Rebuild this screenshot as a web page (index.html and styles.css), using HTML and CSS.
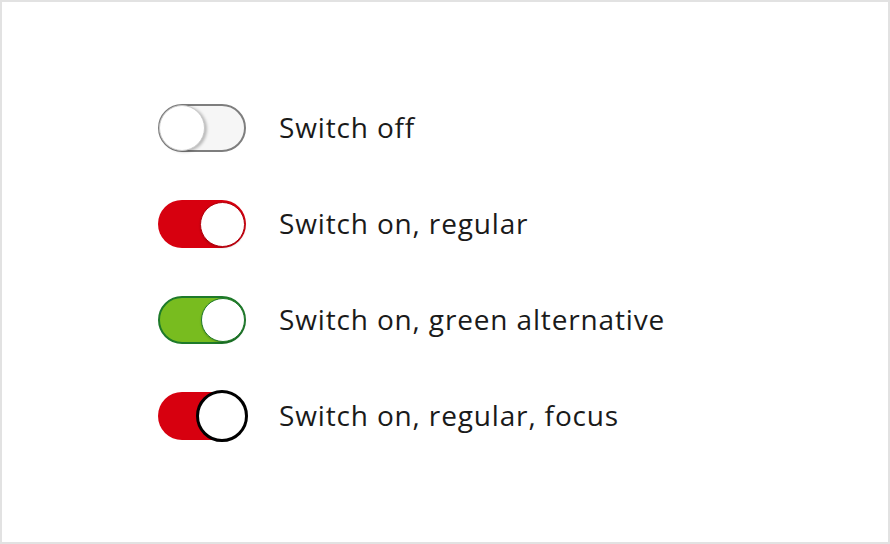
FILE: index.html
```html
<!DOCTYPE html>
<html lang="en">
<head>
<meta charset="utf-8">
<title>Switches</title>
<link rel="stylesheet" href="styles.css">
</head>
<body>
<main class="frame">
  <ul class="list">
    <li class="row">
      <span class="switch switch--off"><span class="knob"></span></span>
      <span class="label">Switch off</span>
    </li>
    <li class="row">
      <span class="switch switch--on"><span class="knob"></span></span>
      <span class="label">Switch on, regular</span>
    </li>
    <li class="row">
      <span class="switch switch--green"><span class="knob"></span></span>
      <span class="label">Switch on, green alternative</span>
    </li>
    <li class="row">
      <span class="switch switch--focus"><span class="knob"></span></span>
      <span class="label">Switch on, regular, focus</span>
    </li>
  </ul>
</main>
</body>
</html>
```

FILE: styles.css
```css
* { box-sizing: border-box; }
html, body { margin: 0; padding: 0; background: #fff; }
.frame {
  width: 890px;
  height: 544px;
  border: 2px solid #e2e2e2;
  padding: 102px 0 0 156px;
  font-family: "Open Sans", "Noto Sans", sans-serif;
  color: #1a1a1a;
}
.list {
  list-style: none;
  margin: 0;
  padding: 0;
  display: flex;
  flex-direction: column;
  gap: 48px;
}
.row {
  display: flex;
  align-items: center;
  gap: 33px;
  height: 48px;
}
.label {
  font-size: 28px;
  line-height: 32px;
  letter-spacing: 0.85px;
  margin-top: -2px;
}
.switch {
  position: relative;
  display: block;
  width: 88px;
  height: 48px;
  border-radius: 24px;
  flex: none;
}
.knob {
  position: absolute;
  border-radius: 50%;
  background: #fff;
}
.switch--off {
  background: #f6f6f6;
  border: 2px solid #7e7e7e;
}
.switch--off .knob {
  left: -1px;
  top: -1px;
  width: 46px;
  height: 46px;
  border: 1px solid #c8c8c8;
  box-shadow: 2px 1px 3px rgba(0,0,0,0.25);
}
.switch--on {
  background: #d7000f;
}
.switch--on .knob {
  right: 1px;
  top: 2px;
  width: 45px;
  height: 45px;
  border: 1px solid #b5000c;
  box-shadow: 0 1px 2px rgba(0,0,0,0.2);
}
.switch--green {
  background: #78bc1f;
  border: 2px solid #1e7a2a;
}
.switch--green .knob {
  right: -1px;
  top: 0;
  width: 44px;
  height: 44px;
  border: 1px solid #1e7a2a;
  box-shadow: 0 1px 2px rgba(0,0,0,0.2);
}
.switch--focus {
  background: #d7000f;
}
.switch--focus .knob {
  right: -2px;
  top: -2px;
  width: 52px;
  height: 52px;
  border: 3px solid #000;
}
```
